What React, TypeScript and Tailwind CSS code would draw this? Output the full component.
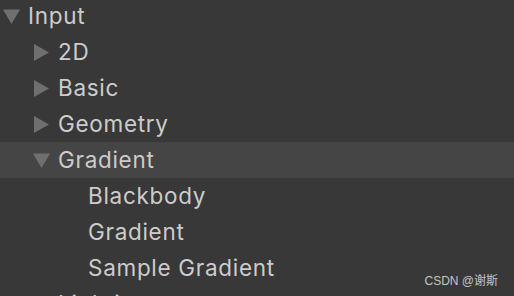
import React from 'react';

type Node = {
  label: string;
  depth: number;
  arrow?: 'down' | 'right';
  selected?: boolean;
};

const rows: Node[] = [
  { label: 'Input', depth: 0, arrow: 'down' },
  { label: '2D', depth: 1, arrow: 'right' },
  { label: 'Basic', depth: 1, arrow: 'right' },
  { label: 'Geometry', depth: 1, arrow: 'right' },
  { label: 'Gradient', depth: 1, arrow: 'down', selected: true },
  { label: 'Blackbody', depth: 2 },
  { label: 'Gradient', depth: 2 },
  { label: 'Sample Gradient', depth: 2 },
  { label: 'Lighting', depth: 1, arrow: 'right' },
];

const indent = ['pl-[3px]', 'pl-[33px]', 'pl-[63px]'];

function Arrow({ dir }: { dir?: 'down' | 'right' }) {
  if (!dir) return <span className="w-[17px] shrink-0" />;
  return (
    <svg width="17" height="17" viewBox="0 0 17 17" className="shrink-0">
      {dir === 'down' ? (
        <polygon points="0,1.5 17,1.5 8.5,16" fill="#6f6f6f" />
      ) : (
        <polygon points="1,0 16,8.5 1,17" fill="#6f6f6f" />
      )}
    </svg>
  );
}

export default function App() {
  return (
    <div
      className="relative w-[514px] h-[296px] overflow-hidden bg-[#383838]"
      style={{ fontFamily: 'Inter, "Noto Sans", sans-serif' }}
    >
      <div className="-mt-[2px] flex flex-col">
        {rows.map((r, i) => (
          <div
            key={i}
            className={`flex items-center h-[36px] gap-[8px] ${indent[r.depth]} ${
              r.selected ? 'bg-[#454545]' : ''
            }`}
          >
            <Arrow dir={r.arrow} />
            <span className="text-[22.5px] font-normal leading-none text-[#cccccc] tracking-[0.7px]">
              {r.label}
            </span>
          </div>
        ))}
      </div>
      <div
        className="absolute right-[16px] bottom-[9px] text-[12px] leading-none text-[#c4c4c4]"
        style={{ fontFamily: '"Liberation Sans", "Noto Sans CJK SC", sans-serif' }}
      >
        CSDN @谢斯
      </div>
    </div>
  );
}
